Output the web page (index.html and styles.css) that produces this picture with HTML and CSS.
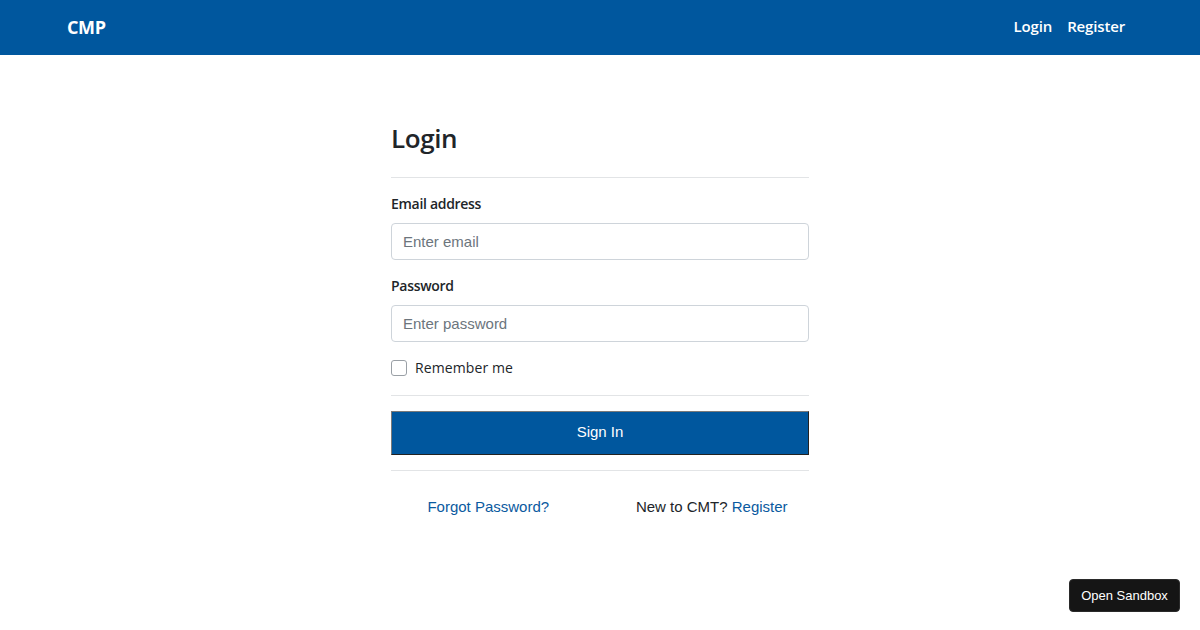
FILE: index.html
```html
<!DOCTYPE html>
<html lang="en">
<head>
<meta charset="utf-8">
<title>CMP - Login</title>
<link rel="stylesheet" href="styles.css">
</head>
<body>
<header class="navbar">
  <a class="brand" href="#">CMP</a>
  <nav class="nav-links">
    <a href="#">Login</a>
    <a href="#">Register</a>
  </nav>
</header>
<main class="login">
  <h1 class="title">Login</h1>
  <hr class="rule rule-top">
  <form class="form">
    <label class="label" for="email">Email address</label>
    <input class="input" id="email" type="email" placeholder="Enter email">
    <label class="label label-second" for="password">Password</label>
    <input class="input" id="password" type="password" placeholder="Enter password">
    <label class="check">
      <span class="box"></span>
      <span class="check-text">Remember me</span>
    </label>
    <hr class="rule rule-mid">
    <button class="submit" type="button">Sign In</button>
    <hr class="rule rule-bottom">
    <div class="links">
      <div class="col col-left"><a href="#">Forgot Password?</a></div>
      <div class="col col-right">New to CMT? <a href="#">Register</a></div>
    </div>
  </form>
</main>
<button class="sandbox" type="button">Open Sandbox</button>
</body>
</html>
```
FILE: styles.css
```css
* { box-sizing: border-box; }
html, body { margin: 0; padding: 0; background: #fff; }
body {
  font-family: "Liberation Sans", Arial, sans-serif;
  font-size: 15px;
  color: #212529;
  width: 1200px;
  height: 630px;
  overflow: hidden;
  position: relative;
}
a { text-decoration: none; color: #0a5aa0; }

.navbar {
  height: 55px;
  background: #00579e;
  display: flex;
  align-items: center;
  justify-content: space-between;
  padding: 0 75px 0 67px;
}
.brand {
  color: #fff;
  font-family: "Open Sans", sans-serif;
  font-weight: 700;
  font-size: 18px;
  letter-spacing: -0.4px;
  margin-top: -2px;
}
.nav-links { display: flex; gap: 15px; margin-top: -3px; }
.nav-links a {
  color: #fff;
  font-family: "Open Sans", sans-serif;
  font-weight: 600;
  font-size: 15px;
  letter-spacing: -0.15px;
}

.login {
  width: 418px;
  margin: 63px auto 0;
}
.title {
  margin: 0;
  height: 40px;
  line-height: 40px;
  font-family: "Open Sans", sans-serif;
  font-size: 26px;
  font-weight: 600;
  letter-spacing: -0.4px;
  color: #212529;
}
.rule {
  border: 0;
  border-top: 1px solid #e2e4e6;
  margin: 0;
}
.rule-top { margin-top: 19px; }
.form { display: flex; flex-direction: column; }
.label {
  margin-top: 16px;
  height: 20px;
  line-height: 20px;
  font-family: "Open Sans", sans-serif;
  font-weight: 600;
  font-size: 14px;
  letter-spacing: -0.3px;
  color: #212529;
}
.input {
  margin-top: 9px;
  height: 37px;
  width: 100%;
  border: 1px solid #ced4da;
  border-radius: 4px;
  padding: 0 11px;
  font-family: "Liberation Sans", Arial, sans-serif;
  font-size: 15px;
  color: #495057;
  outline: none;
}
.input::placeholder { color: #6c757d; }
.check {
  margin-top: 16px;
  height: 20px;
  display: flex;
  align-items: center;
  gap: 8px;
}
.box {
  width: 16px;
  height: 16px;
  border: 1px solid #9aa0a6;
  border-radius: 3px;
  background: #fff;
}
.check-text {
  font-family: "Open Sans", sans-serif;
  font-size: 14px;
  font-weight: 500;
  letter-spacing: 0.1px;
  color: #212529;
  margin-top: -1px;
}
.rule-mid { margin-top: 17px; }
.submit {
  margin-top: 15px;
  height: 44px;
  width: 100%;
  background: #00579e;
  color: #fff;
  font-family: "Liberation Sans", Arial, sans-serif;
  font-size: 15px;
  border: 1px solid;
  border-color: #7a7a7a #222 #222 #7a7a7a;
  padding: 0 0 3px;
}
.rule-bottom { margin-top: 15px; }
.links {
  margin-top: 26px;
  height: 20px;
  line-height: 20px;
  display: flex;
}
.col { flex: 1; text-align: center; }
.col-left { padding-right: 15px; }
.col-right { padding-left: 14px; color: #212529; }

.sandbox {
  position: absolute;
  right: 20px;
  bottom: 18px;
  width: 111px;
  height: 33px;
  background: #151515;
  color: #fff;
  border: 1px solid #2a2a2a;
  border-radius: 4px;
  font-family: "Liberation Sans", Arial, sans-serif;
  font-size: 13px;
  padding: 0;
}
```
